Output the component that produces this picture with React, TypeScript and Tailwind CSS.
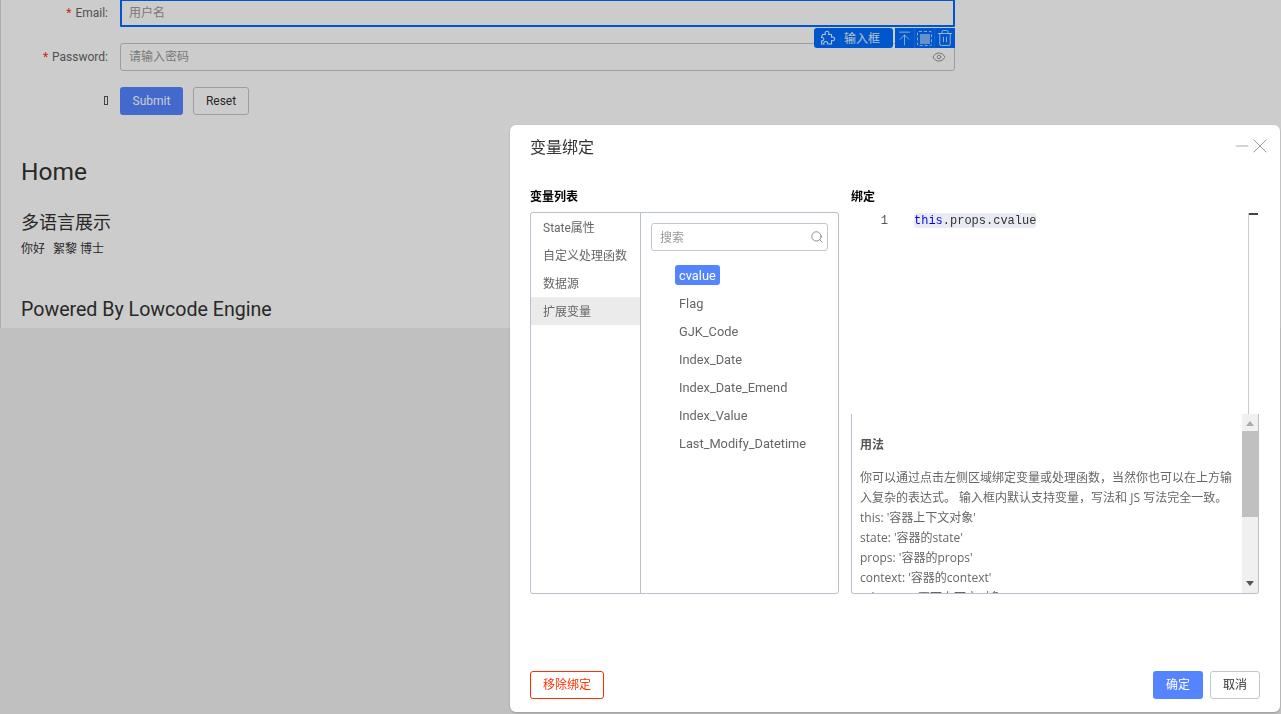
import React from 'react';
import { ArrowUpToLine, Search, Trash2, X, Minus, Eye } from 'lucide-react';

const sans = 'font-[Roboto,"Noto_Sans_CJK_SC",sans-serif]';

function FormRow({ label, children }: { label?: string; children: React.ReactNode }) {
  return (
    <div className="flex items-center mb-4">
      <label className="w-[107px] mr-3 text-right text-xs text-[#666]">
        {label && (
          <>
            <span className="text-[#ff3000] mr-1">*</span>
            {label}
          </>
        )}
        {!label && <span className="inline-block w-[4px] h-[9px] border border-[#555]" />}
      </label>
      {children}
    </div>
  );
}

function PuzzleIcon() {
  return (
    <svg viewBox="0 0 16 16" className="w-4 h-4" fill="none" stroke="currentColor" strokeWidth="1.1" strokeLinejoin="round">
      <path d="M2.5 4.5h3c-.8-1-.6-3 1.4-3.2 2-.1 2.400 2 1.600 3.200h3v2.800c1.300-.7 3.200-.1 3.200 1.600s-1.900 2.300-3.200 1.600v3.500H7.500c.6-1-.2-2.500-1.800-2.500s-2.300 1.500-1.700 2.500H1.500v-3.200c1.300.4 2.300-.4 2.300-1.600S2.800 7.300 1.500 7.700z" />
    </svg>
  );
}

function Toolbar() {
  return (
    <div className="absolute right-0 top-[29px] flex h-5 text-white/90">
      <div className="flex items-center w-[79px] bg-[#006cff] rounded-[3px] pl-[6px] mr-[2px] text-xs">
        <PuzzleIcon />
        <span className="ml-[8px] pt-px">输入框</span>
      </div>
      <div className="flex bg-[#006cff]">
        <div className="w-5 flex items-center justify-center border-r border-white/10">
          <ArrowUpToLine className="w-[17px] h-[17px]" strokeWidth={1.1} />
        </div>
        <div className="w-5 flex items-center justify-center border-r border-white/10">
          <div className="w-[15px] h-[15px] border border-dashed border-white/70 rounded-[2px] flex items-end justify-end p-px">
            <div className="w-[10px] h-[10px] bg-white/50" />
          </div>
        </div>
        <div className="w-5 flex items-center justify-center">
          <Trash2 className="w-[18px] h-[18px]" strokeWidth={1.1} />
        </div>
      </div>
    </div>
  );
}

function VariableList() {
  const groups = ['State属性', '自定义处理函数', '数据源', '扩展变量'];
  const vars = ['Flag', 'GJK_Code', 'Index_Date', 'Index_Date_Emend', 'Index_Value', 'Last_Modify_Datetime'];

  return (
    <div className="w-[309px] flex border border-[#b8c0cc] rounded-[3px]">
      <div className="w-[110px] shrink-0 border-r border-[#b8c0cc]">
        {groups.map((g, i) => (
          <div key={g} className={`h-7 leading-[30px] pl-3 text-xs text-[#666] ${i === 3 ? 'bg-[#ebebeb]' : ''}`}>
            {g}
          </div>
        ))}
      </div>
      <div className="flex-1 pl-[10px] pt-[10px] pr-[10px]">
        <div className="h-7 flex items-center justify-between pl-2 pr-[3px] border border-[#c4c6cf] rounded-[3px]">
          <span className="pt-px text-xs text-[#999]">搜索</span>
          <Search className="w-[14px] h-[14px] text-[#777]" strokeWidth={1.4} />
        </div>
        <div className="mt-[14px] pl-7 text-[12.8px] text-[#666]">
          <div className="h-7 flex items-start">
            <span className="h-5 leading-[21px] px-1 -ml-1 bg-[#5584ff] text-white rounded-[3px]">cvalue</span>
          </div>
          {vars.map((v) => (
            <div key={v} className="h-7 leading-[22px]">
              {v}
            </div>
          ))}
        </div>
      </div>
    </div>
  );
}

function Usage() {
  const lines = [
    "this: '容器上下文对象'",
    "state: '容器的state'",
    "props: '容器的props'",
    "context: '容器的context'",
    "schemas: '页面上下文对象'",
  ];

  return (
    <div className="relative h-[180px] overflow-hidden border border-t-0 border-[#b8c0cc] rounded-b-[3px] pl-2 pr-[26px] font-['Open_Sans','Noto_Sans_CJK_SC',sans-serif] text-xs leading-5 text-[#666]">
      <h4 className="mt-[21px] mb-[13px] font-bold text-[#555]">用法</h4>
      <p>你可以通过点击左侧区域绑定变量或处理函数，当然你也可以在上方输入复杂的表达式。 输入框内默认支持变量，写法和 JS 写法完全一致。</p>
      {lines.map((l) => (
        <div key={l}>{l}</div>
      ))}
      <div className="absolute right-0 top-0 bottom-0 w-4 bg-[#f0f0f0] flex flex-col items-center">
        <div className="mt-[7px] w-0 h-0 border-x-[4px] border-x-transparent border-b-[5px] border-b-[#aaa]" />
        <div className="mt-[5px] w-full h-[86px] bg-[#c0c0c0]" />
        <div className="mt-auto mb-[7px] w-0 h-0 border-x-[4px] border-x-transparent border-t-[5px] border-t-[#555]" />
      </div>
    </div>
  );
}

function Editor() {
  return (
    <div className="h-[202px] relative font-['Liberation_Mono',monospace] text-xs">
      <div className="flex pt-px h-4 leading-4">
        <span className="w-[63px] pr-[26px] text-right text-[#555]">1</span>
        <span className="rounded-[3px] bg-[#e8ecf2] text-[#333]">
          <span className="text-[#0000ff]">this</span>.props.cvalue
        </span>
      </div>
      <div className="absolute right-[10px] top-px bottom-0 w-px bg-[#ccc]" />
      <div className="absolute right-[1px] top-px w-[9px] h-[2px] bg-[#444]" />
    </div>
  );
}

export default function App() {
  return (
    <div className={`relative h-[714px] overflow-hidden bg-[#f0f0f0] ${sans}`}>
      <div className="h-[328px] overflow-hidden bg-white border-l border-[#d8d8e0]">
        <form className="relative w-[954px] -mt-px">
          <FormRow label="Email:">
            <div className="w-[835px] h-7 flex items-center pl-[9px] outline-2 -outline-offset-2 outline-[#006cff] rounded-[1px] text-xs text-[#999]">
              用户名
            </div>
          </FormRow>
          <FormRow label="Password:">
            <div className="w-[835px] h-7 flex items-center justify-between pl-2 pr-2 border border-[#c4c6cf] rounded-[3px] text-xs text-[#999]">
              请输入密码
              <Eye className="w-[14px] h-[14px] text-[#888]" strokeWidth={1.5} />
            </div>
          </FormRow>
          <FormRow>
            <button type="button" className="w-[63px] h-7 bg-[#5584ff] text-white text-xs rounded-[3px]">
              Submit
            </button>
            <button type="button" className="w-[56px] h-7 ml-[10px] border border-[#c4c6cf] text-[#333] text-xs rounded-[3px]">
              Reset
            </button>
          </FormRow>
          <Toolbar />
        </form>
        <div className="pl-5 pt-[25px] text-[#333]">
          <h1 className="text-[24.5px] leading-8">Home</h1>
          <h2 className="mt-[23px] text-lg leading-6">多语言展示</h2>
          <p className="mt-[6px] text-xs leading-4">
            你好<span className="ml-2">絮黎</span> 博士
          </p>
          <p className="mt-[39px] text-[19.6px] leading-7">Powered By Lowcode Engine</p>
        </div>
      </div>

      <div className="fixed inset-0 bg-black/20" />

      <div className="absolute left-[510px] top-[125px] w-[770px] h-[587px] flex flex-col bg-white rounded-[6px] px-5 shadow-[0_1px_2px_rgba(0,0,0,0.2)]">
        <div className="flex items-center justify-between h-[44px] pt-[1px]">
          <h3 className="text-base text-[#333]">变量绑定</h3>
          <div className="flex items-center text-[#999] -mr-[12px] -mt-[3px]">
            <Minus className="w-5 h-5" strokeWidth={1} />
            <X className="w-6 h-6 -ml-[4px]" strokeWidth={1} />
          </div>
        </div>
        <div className="flex mt-[19px] text-xs font-bold text-black leading-[18px]">
          <div className="w-[321px]">变量列表</div>
          <div>绑定</div>
        </div>
        <div className="flex h-[382px] mt-[6px]">
          <VariableList />
          <div className="w-[408px] ml-3">
            <Editor />
            <Usage />
          </div>
        </div>
        <div className="flex items-center mt-auto mb-[13px] text-xs">
          <button type="button" className="w-[74px] h-7 border border-[#ff3000] text-[#ff3000] rounded-[3px]">
            移除绑定
          </button>
          <button type="button" className="ml-auto w-[50px] h-7 bg-[#5584ff] text-white rounded-[3px]">
            确定
          </button>
          <button type="button" className="ml-[7px] w-[50px] h-7 border border-[#c4c6cf] text-[#333] rounded-[3px]">
            取消
          </button>
        </div>
      </div>
    </div>
  );
}
